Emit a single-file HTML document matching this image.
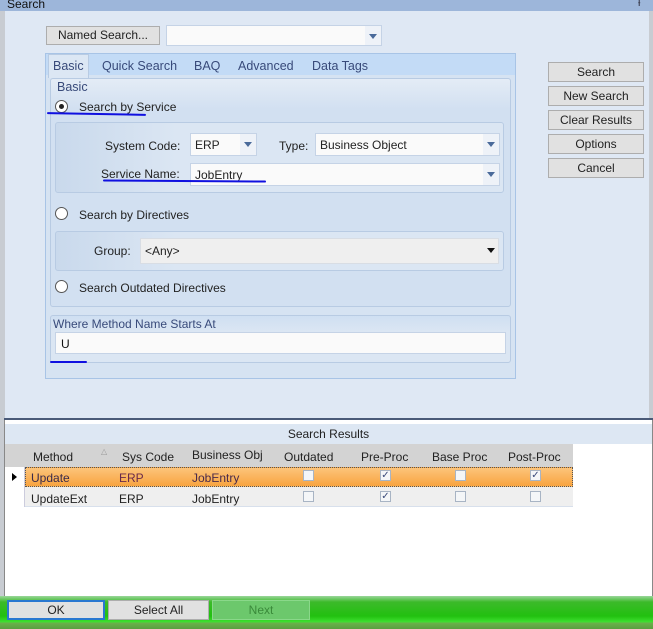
<html><head><style>
*{box-sizing:border-box;margin:0;padding:0}
body{width:653px;height:629px;overflow:hidden;position:relative;background:#dfe8f4;font-family:"Liberation Sans",sans-serif;font-size:12px;color:#222}
.a{position:absolute}
.btn{position:absolute;background:#e1e1e1;border:1px solid #adadad;text-align:center;line-height:19px;font-size:12px;color:#222}
.inp{position:absolute;background:#fafafa;border:1px solid #c5d3e6}
.dd{position:absolute;right:0;top:0;bottom:0;width:16px;background:#eef2f8}
.dd:after{content:"";position:absolute;left:4px;top:8px;border:4px solid transparent;border-top:5px solid #4a6a9a}
.box{position:absolute;border:1px solid #b8cbe3;border-radius:3px}
.rad{position:absolute;width:13px;height:13px;border-radius:50%;border:1px solid #555;background:#fff}
.cb{position:absolute;width:11px;height:11px;border:1px solid #a8b4c4;background:#f4f6f8;font-size:10px;line-height:9px;color:#3a4a7a;text-align:center}
.bl{position:absolute;height:2px;background:#1010e0;border-radius:1px}
</style></head><body>
<div class="a" style="left:0;top:0;width:5px;height:629px;background:#c8ccd2"></div>
<div class="a" style="left:0;top:0;width:653px;height:11px;background:#9db6da"></div>
<div class="a" style="left:7px;top:-3px;font-size:12px;color:#111">Search</div>
<div class="a" style="left:638px;top:-3px;font-size:11px;color:#334">ᵼ</div>
<div class="a" style="left:649px;top:11px;width:4px;height:407px;background:#c8ccd2"></div>

<div class="btn" style="left:46px;top:26px;width:114px;height:19px;line-height:17px">Named Search...</div>
<div class="inp" style="left:166px;top:25px;width:216px;height:21px"><div class="dd"></div></div>

<div class="a" style="left:45px;top:53px;width:471px;height:326px;border:1px solid #a8c4e6;background:#d6e3f2"></div>
<div class="a" style="left:46px;top:54px;width:469px;height:21px;background:#c3dbf6"></div>
<div class="a" style="left:48px;top:54px;width:41px;height:24px;background:#dce7f4;border:1px solid #b8cbe3;border-bottom:none"></div>
<div class="a" style="left:53px;top:59px;color:#384a7a;font-size:12.5px">Basic</div>
<div class="a" style="left:102px;top:59px;color:#384a7a;font-size:12.5px">Quick Search</div>
<div class="a" style="left:194px;top:59px;color:#384a7a;font-size:12.5px">BAQ</div>
<div class="a" style="left:238px;top:59px;color:#384a7a;font-size:12.5px">Advanced</div>
<div class="a" style="left:312px;top:59px;color:#384a7a;font-size:12.5px">Data Tags</div>

<div class="box" style="left:50px;top:78px;width:461px;height:229px;background:linear-gradient(#e4ecf6,#d2e0f1 30px,#d2e0f1)"></div>
<div class="a" style="left:57px;top:80px;color:#384a7a;font-size:12.5px">Basic</div>
<div class="rad" style="left:55px;top:100px"><div class="a" style="left:3px;top:3px;width:5px;height:5px;border-radius:50%;background:#222"></div></div>
<div class="a" style="left:79px;top:100px">Search by Service</div>
<div class="bl" style="left:47px;top:113px;width:99px;transform:rotate(1deg)"></div>

<div class="box" style="left:55px;top:122px;width:449px;height:71px;background:linear-gradient(90deg,#c9d9ec,#dbe6f3 120px)"></div>
<div class="a" style="left:105px;top:139px">System Code:</div>
<div class="inp" style="left:190px;top:133px;width:67px;height:23px;line-height:23px;padding-left:4px">ERP<div class="dd"></div></div>
<div class="a" style="left:279px;top:139px">Type:</div>
<div class="inp" style="left:315px;top:133px;width:185px;height:23px;line-height:23px;padding-left:4px">Business Object<div class="dd"></div></div>
<div class="a" style="left:101px;top:167px">Service Name:</div>
<div class="inp" style="left:190px;top:163px;width:310px;height:23px;line-height:23px;padding-left:4px">JobEntry<div class="dd"></div></div>
<div class="bl" style="left:103px;top:180px;width:163px;transform:rotate(0.4deg)"></div>

<div class="rad" style="left:55px;top:207px"></div>
<div class="a" style="left:79px;top:208px">Search by Directives</div>
<div class="box" style="left:55px;top:231px;width:449px;height:40px;background:linear-gradient(90deg,#c9d9ec,#dbe6f3 120px)"></div>
<div class="a" style="left:94px;top:244px">Group:</div>
<div class="a" style="left:140px;top:238px;width:359px;height:26px;background:#efefef;border:1px solid #d8dde4;line-height:24px;padding-left:4px">&lt;Any&gt;</div>
<div class="a" style="left:487px;top:248px;border:4px solid transparent;border-top:5px solid #111"></div>
<div class="rad" style="left:55px;top:280px"></div>
<div class="a" style="left:79px;top:281px">Search Outdated Directives</div>

<div class="box" style="left:50px;top:315px;width:461px;height:48px;background:linear-gradient(#cfdff2,#dbe6f3 16px)"></div>
<div class="a" style="left:53px;top:317px;color:#384a7a">Where Method Name Starts At</div>
<div class="inp" style="left:55px;top:332px;width:451px;height:22px;line-height:22px;padding-left:5px;color:#111">U</div>
<div class="bl" style="left:50px;top:361px;width:37px"></div>

<div class="btn" style="left:548px;top:62px;width:96px;height:20px">Search</div>
<div class="btn" style="left:548px;top:86px;width:96px;height:20px">New Search</div>
<div class="btn" style="left:548px;top:110px;width:96px;height:20px">Clear Results</div>
<div class="btn" style="left:548px;top:134px;width:96px;height:20px">Options</div>
<div class="btn" style="left:548px;top:158px;width:96px;height:20px">Cancel</div>

<div class="a" style="left:4px;top:418px;width:649px;height:2px;background:#4a5a78"></div>
<div class="a" style="left:4px;top:420px;width:649px;height:177px;background:#fff;border-left:1px solid #888;border-right:1px solid #888"></div>
<div class="a" style="left:5px;top:424px;width:647px;height:20px;background:#dde7f3;text-align:center;line-height:20px">Search Results</div>
<div class="a" style="left:5px;top:444px;width:568px;height:23px;background:#d3d3d3"></div>
<div class="a" style="left:33px;top:450px">Method</div>
<div class="a" style="left:101px;top:447px;font-size:8px;color:#999">△</div>
<div class="a" style="left:122px;top:450px">Sys Code</div>
<div class="a" style="left:192px;top:448px">Business Obj</div>
<div class="a" style="left:284px;top:450px">Outdated</div>
<div class="a" style="left:361px;top:450px">Pre-Proc</div>
<div class="a" style="left:432px;top:450px">Base Proc</div>
<div class="a" style="left:508px;top:450px">Post-Proc</div>
<div class="a" style="left:5px;top:467px;width:20px;height:40px;background:#fff;border-right:1px solid #ccd"></div>
<div class="a" style="left:12px;top:473px;border:4px solid transparent;border-left:5px solid #000"></div>
<div class="a" style="left:25px;top:467px;width:548px;height:20px;background:linear-gradient(#fcc47a,#f8a440);border:1px dotted #555"></div>
<div class="a" style="left:25px;top:487px;width:548px;height:20px;background:#efefef;border-bottom:1px solid #d8e0ec"></div>
<div class="a" style="left:31px;top:471px;color:#3a2a4a">Update</div><div class="a" style="left:119px;top:471px;color:#6a2a4a">ERP</div><div class="a" style="left:192px;top:471px;color:#4a2a4a">JobEntry</div>
<div class="a" style="left:31px;top:492px">UpdateExt</div><div class="a" style="left:119px;top:492px">ERP</div><div class="a" style="left:192px;top:492px">JobEntry</div>
<div class="cb" style="left:303px;top:470px"></div><div class="cb" style="left:380px;top:470px">✓</div><div class="cb" style="left:455px;top:470px"></div><div class="cb" style="left:530px;top:470px">✓</div>
<div class="cb" style="left:303px;top:491px"></div><div class="cb" style="left:380px;top:491px">✓</div><div class="cb" style="left:455px;top:491px"></div><div class="cb" style="left:530px;top:491px"></div>

<div class="a" style="left:0;top:596px;width:653px;height:33px;background:linear-gradient(#9ad69a,#3cba2a 6px,#22c010 20px,#3ee030 26px,#6ab04a 27px,#58a040)"></div>
<div class="btn" style="left:7px;top:600px;width:98px;height:20px;border:2px solid #2a78d0;line-height:17px">OK</div>
<div class="btn" style="left:108px;top:600px;width:101px;height:20px">Select All</div>
<div class="btn" style="left:212px;top:600px;width:98px;height:20px;background:#6cc86c;border-color:#8ad88a;color:#3a8a3a">Next</div>
</body></html>
